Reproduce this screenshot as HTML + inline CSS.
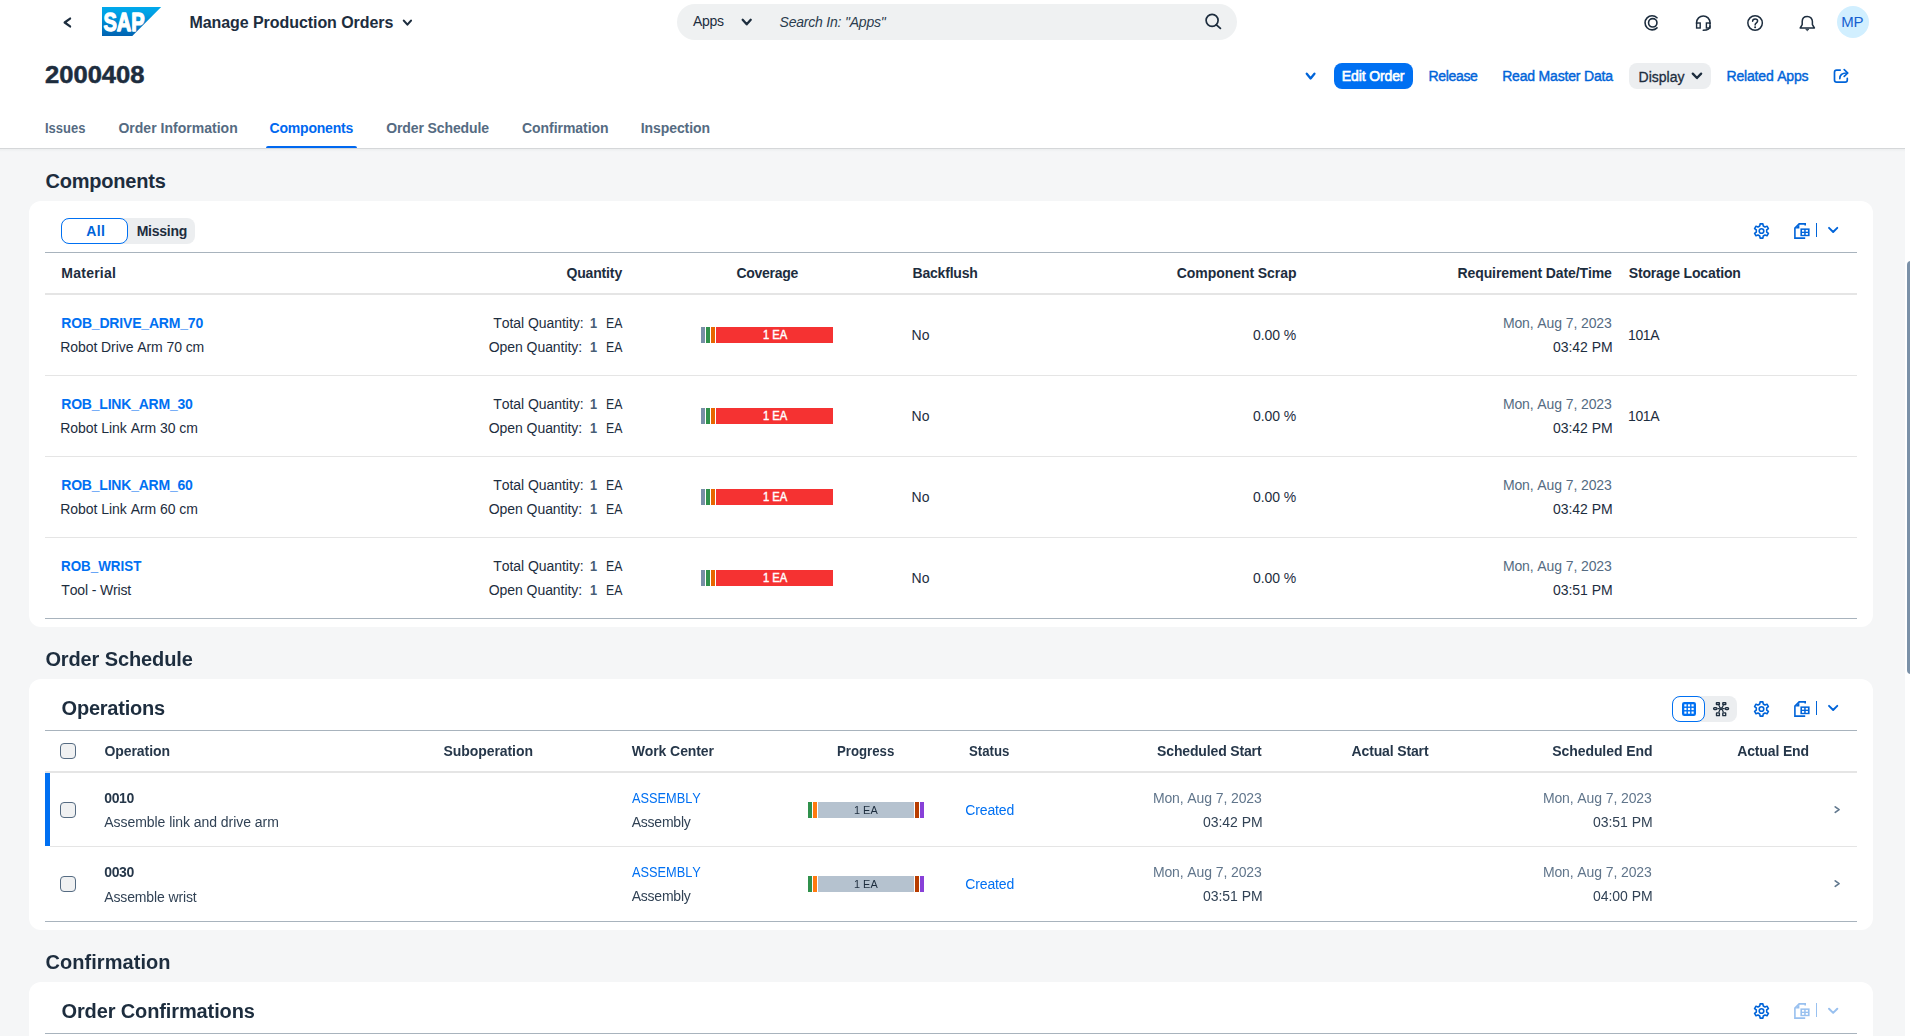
<!DOCTYPE html>
<html lang="en">
<head>
<meta charset="utf-8">
<title>Manage Production Orders</title>
<style>
html,body{margin:0;padding:0;}
body{width:1910px;height:1036px;overflow:hidden;position:relative;background:#fff;font-family:"Liberation Sans", sans-serif;color:#1d2d3e;}
#root{position:absolute;left:0;top:0;width:1910px;height:1036px;overflow:hidden;}
#root div,#root svg{position:absolute;box-sizing:border-box;}
.g{left:0;top:0;width:1910px;height:1036px;will-change:transform;}
.t{position:absolute;white-space:pre;line-height:1;font-kerning:none;}
</style>
</head>
<body>
<div id="root">
<div style="left:0px;top:149px;width:1905px;height:887px;background:#f5f6f7;"></div>
<div style="left:0px;top:148px;width:1905px;height:1px;background:#d5d7d9;"></div>
<div style="left:0px;top:149px;width:1905px;height:3px;background:linear-gradient(#eceeef,#f5f6f7);"></div>
<div style="left:1907px;top:261px;width:8px;height:413px;background:#7b91a8;border-radius:4px;"></div>
<svg style="left:0;top:0;width:1910px;height:1036px" viewBox="0 0 1910 1036"><polyline points="70.08,18.52 64.67,22.50 70.08,26.48" fill="none" stroke="#1d2d3e" stroke-width="2.2" stroke-linecap="round" stroke-linejoin="round"/></svg>
<svg style="left:102px;top:7px;width:59.2px;height:29px;overflow:visible" viewBox="0 0 59.2 29"><defs><linearGradient id="sapg" x1="0" y1="0" x2="0" y2="1"><stop offset="0" stop-color="#00a9ec"/><stop offset="0.25" stop-color="#009fe3"/><stop offset="1" stop-color="#0062b1"/></linearGradient></defs>
<polygon points="0,0 59.2,0 30.3,29 0,29" fill="url(#sapg)"/>
<text x="1.5" y="23.7" font-family="Liberation Sans, sans-serif" font-weight="700" font-size="25" fill="#fff" stroke="#fff" stroke-width="1.3" stroke-linejoin="round" textLength="41.2" lengthAdjust="spacingAndGlyphs">SAP</text></svg>
<svg style="left:0;top:0;width:1910px;height:1036px" viewBox="0 0 1910 1036"><polyline points="403.79,20.59 407.40,24.68 411.01,20.59" fill="none" stroke="#1d2d3e" stroke-width="2.1" stroke-linecap="round" stroke-linejoin="round"/></svg>
<div style="left:677px;top:4px;width:560px;height:36px;background:#eff1f2;border-radius:18px;"></div>
<svg style="left:0;top:0;width:1910px;height:1036px" viewBox="0 0 1910 1036"><polyline points="742.66,19.76 746.70,24.28 750.74,19.76" fill="none" stroke="#1d2d3e" stroke-width="2.3" stroke-linecap="round" stroke-linejoin="round"/></svg>
<svg style="left:1200px;top:10px;width:24px;height:24px;overflow:visible" viewBox="0 0 24 24"><circle cx="12.1" cy="10.3" r="6" fill="none" stroke="#1d2d3e" stroke-width="1.7"/><line x1="16.4" y1="14.8" x2="20.4" y2="18.4" stroke="#1d2d3e" stroke-width="1.8" stroke-linecap="round"/></svg>
<svg style="left:1640px;top:11px;width:24px;height:24px;overflow:visible" viewBox="0 0 24 24"><path d="M17.00,16.92A7.05,7.05 0 1 1 17.00,6.78" fill="none" stroke="#1d2d3e" stroke-width="1.6" stroke-linecap="round"/><circle cx="12.75" cy="11.85" r="4.2" fill="none" stroke="#1d2d3e" stroke-width="1.6"/></svg>
<svg style="left:1691px;top:11px;width:24px;height:24px;overflow:visible" viewBox="0 0 24 24"><path d="M5.6,13 V11.6 A6.7,6.7 0 0 1 19,11.6 V13" fill="none" stroke="#1d2d3e" stroke-width="1.5"/>
<rect x="5.6" y="12" width="3.6" height="5" fill="none" stroke="#1d2d3e" stroke-width="1.4"/>
<rect x="15.4" y="12" width="3.6" height="5" fill="none" stroke="#1d2d3e" stroke-width="1.4"/>
<path d="M19,15 C19,18 16,19.3 12.2,19.3" fill="none" stroke="#1d2d3e" stroke-width="1.5" stroke-linecap="round"/></svg>
<svg style="left:1743px;top:11px;width:24px;height:24px;overflow:visible" viewBox="0 0 24 24"><circle cx="12.1" cy="12" r="7.25" fill="none" stroke="#1d2d3e" stroke-width="1.5"/>
<path d="M9.6,10.2 C9.6,8.6 10.8,7.9 12.1,7.9 C13.6,7.9 14.6,8.8 14.6,10 C14.6,11.8 12.1,11.9 12.1,14" fill="none" stroke="#1d2d3e" stroke-width="1.5" stroke-linecap="round"/>
<circle cx="12.1" cy="16.2" r="1" fill="#1d2d3e"/></svg>
<svg style="left:1795px;top:11px;width:24px;height:24px;overflow:visible" viewBox="0 0 24 24"><path d="M5.2,17 H19.4 L17.4,13.6 V10.6 C17.4,7.4 15.2,5.5 12.3,5.5 C9.4,5.5 7.2,7.4 7.2,10.6 V13.6 Z" fill="none" stroke="#1d2d3e" stroke-width="1.5" stroke-linejoin="round"/>
<path d="M10.6,18.2 H14 L12.3,19.8 Z" fill="#1d2d3e" stroke="#1d2d3e" stroke-width="0.6" stroke-linejoin="round"/></svg>
<div style="left:1837px;top:6px;width:32px;height:32px;background:#d1efff;border-radius:16px;"></div>
<svg style="left:0;top:0;width:1910px;height:1036px" viewBox="0 0 1910 1036"><polyline points="1306.76,73.76 1310.60,78.48 1314.44,73.76" fill="none" stroke="#0064d9" stroke-width="2.3" stroke-linecap="round" stroke-linejoin="round"/></svg>
<div style="left:1334px;top:63px;width:79px;height:26px;background:#0070f2;border-radius:8px;"></div>
<div style="left:1629px;top:63px;width:82px;height:26px;background:#eceef0;border-radius:8px;"></div>
<svg style="left:0;top:0;width:1910px;height:1036px" viewBox="0 0 1910 1036"><polyline points="1692.76,73.66 1696.95,78.08 1701.14,73.66" fill="none" stroke="#1d2d3e" stroke-width="2.3" stroke-linecap="round" stroke-linejoin="round"/></svg>
<svg style="left:1832px;top:67px;width:18px;height:18px;overflow:visible" viewBox="0 0 18 18"><path d="M8.2,3.1 H4.6 C3.3,3.1 2.5,3.9 2.5,5.2 V13 C2.5,14.3 3.3,15.1 4.6,15.1 H13.2 C14.5,15.1 15.3,14.3 15.3,13 V11.4" fill="none" stroke="#0064d9" stroke-width="1.7" stroke-linecap="round"/>
<path d="M7.8,11.6 C7.8,8 9.8,6 14.6,6" fill="none" stroke="#0064d9" stroke-width="1.7" stroke-linecap="round"/>
<path d="M12.2,2.6 L15.8,6 L12.2,9.4" fill="none" stroke="#0064d9" stroke-width="1.7" stroke-linecap="round" stroke-linejoin="round"/></svg>
<div style="left:266px;top:145.6px;width:91px;height:2.4px;background:#0068f0;border-radius:2px 2px 0 0;"></div>
<div style="left:29px;top:201px;width:1844px;height:426px;background:#fff;border-radius:12px;"></div>
<div style="left:61px;top:218px;width:134px;height:26px;background:#eceef0;border-radius:8px;"></div>
<div style="left:61px;top:218px;width:67px;height:26px;background:#fff;border:1px solid #0070f2;border-radius:8px;"></div>
<svg style="left:0;top:0;width:1910px;height:1036px;opacity:1" viewBox="0 0 1910 1036"><path d="M1759.77,225.99 L1760.11,223.83 L1762.89,223.83 L1763.23,225.99 L1764.98,227.00 L1767.01,226.21 L1768.40,228.62 L1766.70,229.99 L1766.70,232.01 L1768.40,233.38 L1767.01,235.79 L1764.98,235.00 L1763.23,236.01 L1762.89,238.17 L1760.11,238.17 L1759.77,236.01 L1758.02,235.00 L1755.99,235.79 L1754.60,233.38 L1756.30,232.01 L1756.30,229.99 L1754.60,228.62 L1755.99,226.21 L1758.02,227.00Z" fill="none" stroke="#0064d9" stroke-width="1.6" stroke-linejoin="round"/><circle cx="1761.5" cy="231" r="2.3" fill="none" stroke="#0064d9" stroke-width="1.6"/></svg>
<svg style="left:1794px;top:223px;width:16px;height:16px;overflow:visible" viewBox="0 0 16 16"><g opacity="1"><path d="M11.2,2.6 V0.9 H5.2 L0.9,5.2 V15.1 H11.2" fill="none" stroke="#0064d9" stroke-width="1.6" stroke-linejoin="miter"/>
<path d="M5.4,1.4 V5.4 H1.4 Z" fill="#0064d9"/>
<rect x="6.4" y="5.4" width="9.2" height="7.8" fill="#0064d9"/>
<rect x="8" y="6.9" width="2.2" height="1.8" fill="#fff"/><rect x="11.7" y="6.9" width="2.2" height="1.8" fill="#fff"/>
<rect x="8" y="10" width="2.2" height="1.8" fill="#fff"/><rect x="11.7" y="10" width="2.2" height="1.8" fill="#fff"/></g></svg>
<div style="left:1816px;top:223px;width:1px;height:14px;background:#0064d9;opacity:1;"></div>
<div style="left:0;top:0;width:1910px;height:1036px;opacity:1">
<svg style="left:0;top:0;width:1910px;height:1036px" viewBox="0 0 1910 1036"><polyline points="1829.01,227.81 1833.15,231.97 1837.29,227.81" fill="none" stroke="#0064d9" stroke-width="1.9" stroke-linecap="round" stroke-linejoin="round"/></svg>
</div>
<div style="left:45px;top:252px;width:1812px;height:1px;background:#a8b3bd;"></div>
<div style="left:45px;top:293px;width:1812px;height:2px;background:#e5e5e5;"></div>
<div style="left:701px;top:327px;width:4px;height:16px;background:#788fa6;"></div>
<div style="left:706px;top:327px;width:4px;height:16px;background:#30914c;"></div>
<div style="left:711px;top:327px;width:4px;height:16px;background:#e76500;"></div>
<div style="left:716px;top:327px;width:117px;height:16px;background:#f53232;"></div>
<div style="left:45px;top:375px;width:1812px;height:1px;background:#e5e5e5;"></div>
<div style="left:701px;top:408px;width:4px;height:16px;background:#788fa6;"></div>
<div style="left:706px;top:408px;width:4px;height:16px;background:#30914c;"></div>
<div style="left:711px;top:408px;width:4px;height:16px;background:#e76500;"></div>
<div style="left:716px;top:408px;width:117px;height:16px;background:#f53232;"></div>
<div style="left:45px;top:456px;width:1812px;height:1px;background:#e5e5e5;"></div>
<div style="left:701px;top:489px;width:4px;height:16px;background:#788fa6;"></div>
<div style="left:706px;top:489px;width:4px;height:16px;background:#30914c;"></div>
<div style="left:711px;top:489px;width:4px;height:16px;background:#e76500;"></div>
<div style="left:716px;top:489px;width:117px;height:16px;background:#f53232;"></div>
<div style="left:45px;top:537px;width:1812px;height:1px;background:#e5e5e5;"></div>
<div style="left:701px;top:570px;width:4px;height:16px;background:#788fa6;"></div>
<div style="left:706px;top:570px;width:4px;height:16px;background:#30914c;"></div>
<div style="left:711px;top:570px;width:4px;height:16px;background:#e76500;"></div>
<div style="left:716px;top:570px;width:117px;height:16px;background:#f53232;"></div>
<div style="left:45px;top:618px;width:1812px;height:1px;background:#a8b3bd;"></div>
<div style="left:29px;top:679px;width:1844px;height:251px;background:#fff;border-radius:12px;"></div>
<div style="left:1672px;top:696px;width:65px;height:26px;background:#eceef0;border-radius:8px;"></div>
<div style="left:1672px;top:696px;width:33px;height:26px;background:#fff;border:1px solid #0070f2;border-radius:8px;"></div>
<svg style="left:1681.5px;top:701.9px;width:14.3px;height:14.2px;overflow:visible" viewBox="0 0 14.3 14.2"><rect x="0" y="0" width="14" height="14" rx="2.2" fill="#0070f2"/><rect x="2.3" y="2.3" width="2.2" height="2.2" fill="#fff"/><rect x="5.9" y="2.3" width="2.2" height="2.2" fill="#fff"/><rect x="9.5" y="2.3" width="2.2" height="2.2" fill="#fff"/><rect x="2.3" y="5.9" width="2.2" height="2.2" fill="#fff"/><rect x="5.9" y="5.9" width="2.2" height="2.2" fill="#fff"/><rect x="9.5" y="5.9" width="2.2" height="2.2" fill="#fff"/><rect x="2.3" y="9.5" width="2.2" height="2.2" fill="#fff"/><rect x="5.9" y="9.5" width="2.2" height="2.2" fill="#fff"/><rect x="9.5" y="9.5" width="2.2" height="2.2" fill="#fff"/></svg>
<svg style="left:1712.9px;top:701.8px;width:16.2px;height:14.3px;overflow:visible" viewBox="0 0 16.2 14.3"><rect x="3.4" y="0.6" width="3.0" height="1.9" rx="0.3" fill="none" stroke="#1f2f40" stroke-width="1.35"/><rect x="9.8" y="0.6" width="3.0" height="1.9" rx="0.3" fill="none" stroke="#1f2f40" stroke-width="1.35"/><rect x="3.5" y="10.9" width="2.9" height="2.8" rx="0.3" fill="none" stroke="#1f2f40" stroke-width="1.35"/><rect x="9.8" y="10.9" width="2.9" height="2.8" rx="0.3" fill="none" stroke="#1f2f40" stroke-width="1.35"/><rect x="0.6" y="5.7" width="3.4" height="1.8" rx="0.9" fill="none" stroke="#1f2f40" stroke-width="1.35"/><rect x="12.2" y="5.7" width="3.4" height="1.8" rx="0.9" fill="none" stroke="#1f2f40" stroke-width="1.35"/><rect x="7.0" y="5.8" width="2.2" height="1.6" rx="0.3" fill="none" stroke="#1f2f40" stroke-width="1.35"/>
<path d="M7.0,5.8 L5.8,3.1 M9.2,5.8 L10.4,3.1 M7.0,7.4 L5.8,10.3 M9.2,7.4 L10.4,10.3 M4.6,6.6 H6.4 M9.8,6.6 H11.6" stroke="#1f2f40" stroke-width="1.2" fill="none"/></svg>
<svg style="left:0;top:0;width:1910px;height:1036px;opacity:1" viewBox="0 0 1910 1036"><path d="M1759.77,703.99 L1760.11,701.83 L1762.89,701.83 L1763.23,703.99 L1764.98,705.00 L1767.01,704.21 L1768.40,706.62 L1766.70,707.99 L1766.70,710.01 L1768.40,711.38 L1767.01,713.79 L1764.98,713.00 L1763.23,714.01 L1762.89,716.17 L1760.11,716.17 L1759.77,714.01 L1758.02,713.00 L1755.99,713.79 L1754.60,711.38 L1756.30,710.01 L1756.30,707.99 L1754.60,706.62 L1755.99,704.21 L1758.02,705.00Z" fill="none" stroke="#0064d9" stroke-width="1.6" stroke-linejoin="round"/><circle cx="1761.5" cy="709" r="2.3" fill="none" stroke="#0064d9" stroke-width="1.6"/></svg>
<svg style="left:1794px;top:701px;width:16px;height:16px;overflow:visible" viewBox="0 0 16 16"><g opacity="1"><path d="M11.2,2.6 V0.9 H5.2 L0.9,5.2 V15.1 H11.2" fill="none" stroke="#0064d9" stroke-width="1.6" stroke-linejoin="miter"/>
<path d="M5.4,1.4 V5.4 H1.4 Z" fill="#0064d9"/>
<rect x="6.4" y="5.4" width="9.2" height="7.8" fill="#0064d9"/>
<rect x="8" y="6.9" width="2.2" height="1.8" fill="#fff"/><rect x="11.7" y="6.9" width="2.2" height="1.8" fill="#fff"/>
<rect x="8" y="10" width="2.2" height="1.8" fill="#fff"/><rect x="11.7" y="10" width="2.2" height="1.8" fill="#fff"/></g></svg>
<div style="left:1816px;top:701px;width:1px;height:14px;background:#0064d9;opacity:1;"></div>
<div style="left:0;top:0;width:1910px;height:1036px;opacity:1">
<svg style="left:0;top:0;width:1910px;height:1036px" viewBox="0 0 1910 1036"><polyline points="1829.01,705.81 1833.15,709.97 1837.29,705.81" fill="none" stroke="#0064d9" stroke-width="1.9" stroke-linecap="round" stroke-linejoin="round"/></svg>
</div>
<div style="left:45px;top:730px;width:1812px;height:1px;background:#a8b3bd;"></div>
<div style="left:60px;top:743px;width:16px;height:16px;background:#f0f1f2;border:1.2px solid #556b82;border-radius:4px;"></div>
<div style="left:45px;top:771px;width:1812px;height:2px;background:#e5e5e5;"></div>
<div style="left:45px;top:773px;width:5px;height:73px;background:#0070f2;"></div>
<div style="left:60px;top:802px;width:16px;height:16px;background:#f0f1f2;border:1.2px solid #556b82;border-radius:4px;"></div>
<div style="left:808px;top:802px;width:4px;height:16px;background:#30914c;"></div>
<div style="left:813px;top:802px;width:4px;height:16px;background:#ff7a0f;"></div>
<div style="left:818px;top:802px;width:96px;height:16px;background:#b5c2cf;"></div>
<div style="left:915px;top:802px;width:4px;height:16px;background:#b83d00;"></div>
<div style="left:920px;top:802px;width:4px;height:16px;background:#8840d8;"></div>
<svg style="left:0;top:0;width:1910px;height:1036px" viewBox="0 0 1910 1036"><polyline points="1835.24,806.84 1839.07,809.60 1835.24,812.36" fill="none" stroke="#62798f" stroke-width="1.7" stroke-linecap="round" stroke-linejoin="round"/></svg>
<div style="left:60px;top:876px;width:16px;height:16px;background:#f0f1f2;border:1.2px solid #556b82;border-radius:4px;"></div>
<div style="left:808px;top:876px;width:4px;height:16px;background:#30914c;"></div>
<div style="left:813px;top:876px;width:4px;height:16px;background:#ff7a0f;"></div>
<div style="left:818px;top:876px;width:96px;height:16px;background:#b5c2cf;"></div>
<div style="left:915px;top:876px;width:4px;height:16px;background:#b83d00;"></div>
<div style="left:920px;top:876px;width:4px;height:16px;background:#8840d8;"></div>
<svg style="left:0;top:0;width:1910px;height:1036px" viewBox="0 0 1910 1036"><polyline points="1835.24,880.84 1839.07,883.60 1835.24,886.36" fill="none" stroke="#62798f" stroke-width="1.7" stroke-linecap="round" stroke-linejoin="round"/></svg>
<div style="left:50px;top:846px;width:1807px;height:1px;background:#e5e5e5;"></div>
<div style="left:45px;top:921px;width:1812px;height:1px;background:#a8b3bd;"></div>
<div style="left:29px;top:982px;width:1844px;height:80px;background:#fff;border-radius:12px;"></div>
<svg style="left:0;top:0;width:1910px;height:1036px;opacity:1" viewBox="0 0 1910 1036"><path d="M1759.77,1005.99 L1760.11,1003.83 L1762.89,1003.83 L1763.23,1005.99 L1764.98,1007.00 L1767.01,1006.21 L1768.40,1008.62 L1766.70,1009.99 L1766.70,1012.01 L1768.40,1013.38 L1767.01,1015.79 L1764.98,1015.00 L1763.23,1016.01 L1762.89,1018.17 L1760.11,1018.17 L1759.77,1016.01 L1758.02,1015.00 L1755.99,1015.79 L1754.60,1013.38 L1756.30,1012.01 L1756.30,1009.99 L1754.60,1008.62 L1755.99,1006.21 L1758.02,1007.00Z" fill="none" stroke="#0064d9" stroke-width="1.6" stroke-linejoin="round"/><circle cx="1761.5" cy="1011" r="2.3" fill="none" stroke="#0064d9" stroke-width="1.6"/></svg>
<svg style="left:1794px;top:1003px;width:16px;height:16px;overflow:visible" viewBox="0 0 16 16"><g opacity="0.4"><path d="M11.2,2.6 V0.9 H5.2 L0.9,5.2 V15.1 H11.2" fill="none" stroke="#0064d9" stroke-width="1.6" stroke-linejoin="miter"/>
<path d="M5.4,1.4 V5.4 H1.4 Z" fill="#0064d9"/>
<rect x="6.4" y="5.4" width="9.2" height="7.8" fill="#0064d9"/>
<rect x="8" y="6.9" width="2.2" height="1.8" fill="#fff"/><rect x="11.7" y="6.9" width="2.2" height="1.8" fill="#fff"/>
<rect x="8" y="10" width="2.2" height="1.8" fill="#fff"/><rect x="11.7" y="10" width="2.2" height="1.8" fill="#fff"/></g></svg>
<div style="left:1816px;top:1003px;width:1px;height:14px;background:#0064d9;opacity:0.4;"></div>
<div style="left:0;top:0;width:1910px;height:1036px;opacity:0.4">
<svg style="left:0;top:0;width:1910px;height:1036px" viewBox="0 0 1910 1036"><polyline points="1829.01,1008.71 1833.15,1012.87 1837.29,1008.71" fill="none" stroke="#0064d9" stroke-width="1.9" stroke-linecap="round" stroke-linejoin="round"/></svg>
</div>
<div style="left:45px;top:1033px;width:1812px;height:1px;background:#a8b3bd;"></div>
<span class="t" style="left:189.40px;top:15px;font-size:16px;font-weight:700;letter-spacing:-0.060px;">Manage Production Orders</span>
<span class="t" style="left:693.00px;top:14px;font-size:14px;letter-spacing:-0.303px;">Apps</span>
<span class="t" style="left:779.50px;top:15px;font-size:14px;font-style:italic;color:#2b3c4e;letter-spacing:-0.205px;">Search In: &quot;Apps&quot;</span>
<span class="t" style="left:1841.30px;top:14px;font-size:15px;color:#1660d0;letter-spacing:-0.195px;">MP</span>
<span class="t" style="left:45.40px;top:63px;font-size:24px;font-weight:700;transform:scaleX(1.0646);transform-origin:0 0;-webkit-text-stroke:0.5px #1d2d3e;">2000408</span>
<span class="t" style="left:1341.80px;top:69px;font-size:14px;color:#fff;letter-spacing:-0.126px;-webkit-text-stroke:0.6px #fff;">Edit Order</span>
<span class="t" style="left:1428.40px;top:69px;font-size:14px;color:#0064d9;letter-spacing:-0.313px;-webkit-text-stroke:0.4px #0064d9;">Release</span>
<span class="t" style="left:1502.20px;top:69px;font-size:14px;color:#0064d9;letter-spacing:-0.188px;-webkit-text-stroke:0.4px #0064d9;">Read Master Data</span>
<span class="t" style="left:1638.60px;top:70px;font-size:14px;letter-spacing:-0.017px;-webkit-text-stroke:0.3px #1d2d3e;">Display</span>
<span class="t" style="left:1726.60px;top:69px;font-size:14px;color:#0064d9;letter-spacing:-0.196px;-webkit-text-stroke:0.4px #0064d9;">Related Apps</span>
<span class="t" style="left:45.40px;top:121px;font-size:14px;font-weight:700;color:#556b82;transform:scaleX(0.9269);transform-origin:0 0;">Issues</span>
<span class="t" style="left:118.40px;top:121px;font-size:14px;font-weight:700;color:#556b82;letter-spacing:0.022px;">Order Information</span>
<span class="t" style="left:269.60px;top:121px;font-size:14px;font-weight:700;color:#0068f0;letter-spacing:-0.207px;">Components</span>
<span class="t" style="left:386.20px;top:121px;font-size:14px;font-weight:700;color:#556b82;letter-spacing:-0.105px;">Order Schedule</span>
<span class="t" style="left:521.90px;top:121px;font-size:14px;font-weight:700;color:#556b82;letter-spacing:-0.032px;">Confirmation</span>
<span class="t" style="left:640.80px;top:121px;font-size:14px;font-weight:700;color:#556b82;letter-spacing:-0.095px;">Inspection</span>
<span class="t" style="left:45.40px;top:171px;font-size:20px;font-weight:700;letter-spacing:-0.199px;">Components</span>
<span class="t" style="left:86.30px;top:224px;font-size:14px;font-weight:700;color:#0064d9;letter-spacing:0.350px;">All</span>
<span class="t" style="left:136.70px;top:224px;font-size:14px;font-weight:700;letter-spacing:-0.261px;">Missing</span>
<span class="t" style="left:61.30px;top:266px;font-size:14px;font-weight:700;letter-spacing:0.240px;">Material</span>
<span class="t" style="left:566.40px;top:266px;font-size:14px;font-weight:700;letter-spacing:-0.142px;">Quantity</span>
<span class="t" style="left:736.50px;top:266px;font-size:14px;font-weight:700;letter-spacing:-0.303px;">Coverage</span>
<span class="t" style="left:912.50px;top:266px;font-size:14px;font-weight:700;letter-spacing:-0.195px;">Backflush</span>
<span class="t" style="left:1176.70px;top:266px;font-size:14px;font-weight:700;letter-spacing:-0.051px;">Component Scrap</span>
<span class="t" style="left:1457.50px;top:266px;font-size:14px;font-weight:700;letter-spacing:-0.102px;">Requirement Date/Time</span>
<span class="t" style="left:1628.70px;top:266px;font-size:14px;font-weight:700;letter-spacing:-0.146px;">Storage Location</span>
<span class="t" style="left:61.30px;top:316px;font-size:14px;font-weight:700;color:#0070f2;letter-spacing:-0.188px;">ROB_DRIVE_ARM_70</span>
<span class="t" style="left:60.30px;top:340px;font-size:14px;letter-spacing:-0.076px;">Robot Drive Arm 70 cm</span>
<span class="t" style="left:493.20px;top:316px;font-size:14px;letter-spacing:-0.043px;">Total Quantity:</span>
<span class="t" style="left:590.40px;top:316px;font-size:14px;font-weight:700;color:#475e75;transform:scaleX(0.9125);transform-origin:0 0;">1</span>
<span class="t" style="left:605.72px;top:316px;font-size:14px;transform:scaleX(0.8780);transform-origin:0 0;">EA</span>
<span class="t" style="left:488.80px;top:340px;font-size:14px;letter-spacing:-0.067px;">Open Quantity:</span>
<span class="t" style="left:590.40px;top:340px;font-size:14px;font-weight:700;color:#475e75;transform:scaleX(0.9125);transform-origin:0 0;">1</span>
<span class="t" style="left:605.72px;top:340px;font-size:14px;transform:scaleX(0.8780);transform-origin:0 0;">EA</span>
<span class="t" style="left:762.70px;top:329px;font-size:12px;color:#fff;transform:scaleX(0.9342);transform-origin:0 0;-webkit-text-stroke:0.4px #fff;">1 EA</span>
<span class="t" style="left:911.50px;top:328px;font-size:14px;letter-spacing:0.190px;">No</span>
<span class="t" style="left:1253.10px;top:328px;font-size:14px;letter-spacing:-0.088px;">0.00 %</span>
<span class="t" style="left:1502.90px;top:316px;font-size:14px;color:#556b82;letter-spacing:-0.109px;">Mon, Aug 7, 2023</span>
<span class="t" style="left:1553.00px;top:340px;font-size:14px;letter-spacing:-0.037px;">03:42 PM</span>
<span class="t" style="left:1628.00px;top:328px;font-size:14px;letter-spacing:-0.353px;">101A</span>
<span class="t" style="left:61.30px;top:397px;font-size:14px;font-weight:700;color:#0070f2;letter-spacing:-0.214px;">ROB_LINK_ARM_30</span>
<span class="t" style="left:60.30px;top:421px;font-size:14px;letter-spacing:-0.044px;">Robot Link Arm 30 cm</span>
<span class="t" style="left:493.20px;top:397px;font-size:14px;letter-spacing:-0.043px;">Total Quantity:</span>
<span class="t" style="left:590.40px;top:397px;font-size:14px;font-weight:700;color:#475e75;transform:scaleX(0.9125);transform-origin:0 0;">1</span>
<span class="t" style="left:605.72px;top:397px;font-size:14px;transform:scaleX(0.8780);transform-origin:0 0;">EA</span>
<span class="t" style="left:488.80px;top:421px;font-size:14px;letter-spacing:-0.067px;">Open Quantity:</span>
<span class="t" style="left:590.40px;top:421px;font-size:14px;font-weight:700;color:#475e75;transform:scaleX(0.9125);transform-origin:0 0;">1</span>
<span class="t" style="left:605.72px;top:421px;font-size:14px;transform:scaleX(0.8780);transform-origin:0 0;">EA</span>
<span class="t" style="left:762.70px;top:410px;font-size:12px;color:#fff;transform:scaleX(0.9342);transform-origin:0 0;-webkit-text-stroke:0.4px #fff;">1 EA</span>
<span class="t" style="left:911.50px;top:409px;font-size:14px;letter-spacing:0.190px;">No</span>
<span class="t" style="left:1253.10px;top:409px;font-size:14px;letter-spacing:-0.088px;">0.00 %</span>
<span class="t" style="left:1502.90px;top:397px;font-size:14px;color:#556b82;letter-spacing:-0.109px;">Mon, Aug 7, 2023</span>
<span class="t" style="left:1553.00px;top:421px;font-size:14px;letter-spacing:-0.037px;">03:42 PM</span>
<span class="t" style="left:1628.00px;top:409px;font-size:14px;letter-spacing:-0.353px;">101A</span>
<span class="t" style="left:61.30px;top:478px;font-size:14px;font-weight:700;color:#0070f2;letter-spacing:-0.214px;">ROB_LINK_ARM_60</span>
<span class="t" style="left:60.30px;top:502px;font-size:14px;letter-spacing:-0.044px;">Robot Link Arm 60 cm</span>
<span class="t" style="left:493.20px;top:478px;font-size:14px;letter-spacing:-0.043px;">Total Quantity:</span>
<span class="t" style="left:590.40px;top:478px;font-size:14px;font-weight:700;color:#475e75;transform:scaleX(0.9125);transform-origin:0 0;">1</span>
<span class="t" style="left:605.72px;top:478px;font-size:14px;transform:scaleX(0.8780);transform-origin:0 0;">EA</span>
<span class="t" style="left:488.80px;top:502px;font-size:14px;letter-spacing:-0.067px;">Open Quantity:</span>
<span class="t" style="left:590.40px;top:502px;font-size:14px;font-weight:700;color:#475e75;transform:scaleX(0.9125);transform-origin:0 0;">1</span>
<span class="t" style="left:605.72px;top:502px;font-size:14px;transform:scaleX(0.8780);transform-origin:0 0;">EA</span>
<span class="t" style="left:762.70px;top:491px;font-size:12px;color:#fff;transform:scaleX(0.9342);transform-origin:0 0;-webkit-text-stroke:0.4px #fff;">1 EA</span>
<span class="t" style="left:911.50px;top:490px;font-size:14px;letter-spacing:0.190px;">No</span>
<span class="t" style="left:1253.10px;top:490px;font-size:14px;letter-spacing:-0.088px;">0.00 %</span>
<span class="t" style="left:1502.90px;top:478px;font-size:14px;color:#556b82;letter-spacing:-0.109px;">Mon, Aug 7, 2023</span>
<span class="t" style="left:1553.00px;top:502px;font-size:14px;letter-spacing:-0.037px;">03:42 PM</span>
<span class="t" style="left:61.30px;top:559px;font-size:14px;font-weight:700;color:#0070f2;transform:scaleX(0.9568);transform-origin:0 0;">ROB_WRIST</span>
<span class="t" style="left:61.30px;top:583px;font-size:14px;letter-spacing:-0.151px;">Tool - Wrist</span>
<span class="t" style="left:493.20px;top:559px;font-size:14px;letter-spacing:-0.043px;">Total Quantity:</span>
<span class="t" style="left:590.40px;top:559px;font-size:14px;font-weight:700;color:#475e75;transform:scaleX(0.9125);transform-origin:0 0;">1</span>
<span class="t" style="left:605.72px;top:559px;font-size:14px;transform:scaleX(0.8780);transform-origin:0 0;">EA</span>
<span class="t" style="left:488.80px;top:583px;font-size:14px;letter-spacing:-0.067px;">Open Quantity:</span>
<span class="t" style="left:590.40px;top:583px;font-size:14px;font-weight:700;color:#475e75;transform:scaleX(0.9125);transform-origin:0 0;">1</span>
<span class="t" style="left:605.72px;top:583px;font-size:14px;transform:scaleX(0.8780);transform-origin:0 0;">EA</span>
<span class="t" style="left:762.70px;top:572px;font-size:12px;color:#fff;transform:scaleX(0.9342);transform-origin:0 0;-webkit-text-stroke:0.4px #fff;">1 EA</span>
<span class="t" style="left:911.50px;top:571px;font-size:14px;letter-spacing:0.190px;">No</span>
<span class="t" style="left:1253.10px;top:571px;font-size:14px;letter-spacing:-0.088px;">0.00 %</span>
<span class="t" style="left:1502.90px;top:559px;font-size:14px;color:#556b82;letter-spacing:-0.109px;">Mon, Aug 7, 2023</span>
<span class="t" style="left:1553.00px;top:583px;font-size:14px;letter-spacing:-0.037px;">03:51 PM</span>
<div class="g">
<span class="t" style="left:45.40px;top:649px;font-size:20px;font-weight:700;letter-spacing:-0.116px;">Order Schedule</span>
<span class="t" style="left:61.60px;top:698px;font-size:20px;font-weight:700;letter-spacing:-0.228px;">Operations</span>
<span class="t" style="left:104.50px;top:744px;font-size:14px;font-weight:700;color:#26374a;letter-spacing:-0.083px;">Operation</span>
<span class="t" style="left:443.50px;top:744px;font-size:14px;font-weight:700;color:#26374a;letter-spacing:-0.070px;">Suboperation</span>
<span class="t" style="left:631.70px;top:744px;font-size:14px;font-weight:700;color:#26374a;letter-spacing:-0.093px;">Work Center</span>
<span class="t" style="left:836.80px;top:744px;font-size:14px;font-weight:700;color:#26374a;transform:scaleX(0.9440);transform-origin:0 0;">Progress</span>
<span class="t" style="left:969.40px;top:744px;font-size:14px;font-weight:700;color:#26374a;transform:scaleX(0.9442);transform-origin:0 0;">Status</span>
<span class="t" style="left:1157.10px;top:744px;font-size:14px;font-weight:700;color:#26374a;letter-spacing:-0.151px;">Scheduled Start</span>
<span class="t" style="left:1351.60px;top:744px;font-size:14px;font-weight:700;color:#26374a;letter-spacing:-0.146px;">Actual Start</span>
<span class="t" style="left:1552.20px;top:744px;font-size:14px;font-weight:700;color:#26374a;letter-spacing:-0.064px;">Scheduled End</span>
<span class="t" style="left:1737.20px;top:744px;font-size:14px;font-weight:700;color:#26374a;letter-spacing:-0.141px;">Actual End</span>
<span class="t" style="left:104.20px;top:791px;font-size:14px;font-weight:700;color:#26374a;letter-spacing:-0.319px;">0010</span>
<span class="t" style="left:104.20px;top:815px;font-size:14px;color:#314255;letter-spacing:-0.046px;">Assemble link and drive arm</span>
<span class="t" style="left:631.70px;top:791px;font-size:14px;color:#0070f2;transform:scaleX(0.9121);transform-origin:0 0;">ASSEMBLY</span>
<span class="t" style="left:631.70px;top:815px;font-size:14px;color:#314255;letter-spacing:-0.226px;">Assembly</span>
<span class="t" style="left:853.50px;top:805px;font-size:11.5px;transform:scaleX(0.9501);transform-origin:0 0;">1 EA</span>
<span class="t" style="left:965.20px;top:803px;font-size:14px;color:#0070f2;letter-spacing:-0.120px;">Created</span>
<span class="t" style="left:1152.90px;top:791px;font-size:14px;color:#60758b;letter-spacing:-0.109px;">Mon, Aug 7, 2023</span>
<span class="t" style="left:1203.00px;top:815px;font-size:14px;color:#314255;letter-spacing:-0.037px;">03:42 PM</span>
<span class="t" style="left:1542.90px;top:791px;font-size:14px;color:#60758b;letter-spacing:-0.109px;">Mon, Aug 7, 2023</span>
<span class="t" style="left:1593.00px;top:815px;font-size:14px;color:#314255;letter-spacing:-0.037px;">03:51 PM</span>
<span class="t" style="left:104.20px;top:865px;font-size:14px;font-weight:700;color:#26374a;letter-spacing:-0.319px;">0030</span>
<span class="t" style="left:104.20px;top:890px;font-size:14px;color:#314255;letter-spacing:-0.126px;">Assemble wrist</span>
<span class="t" style="left:631.70px;top:865px;font-size:14px;color:#0070f2;transform:scaleX(0.9121);transform-origin:0 0;">ASSEMBLY</span>
<span class="t" style="left:631.70px;top:889px;font-size:14px;color:#314255;letter-spacing:-0.226px;">Assembly</span>
<span class="t" style="left:853.50px;top:879px;font-size:11.5px;transform:scaleX(0.9501);transform-origin:0 0;">1 EA</span>
<span class="t" style="left:965.20px;top:877px;font-size:14px;color:#0070f2;letter-spacing:-0.120px;">Created</span>
<span class="t" style="left:1152.90px;top:865px;font-size:14px;color:#60758b;letter-spacing:-0.109px;">Mon, Aug 7, 2023</span>
<span class="t" style="left:1203.00px;top:889px;font-size:14px;color:#314255;letter-spacing:-0.037px;">03:51 PM</span>
<span class="t" style="left:1542.90px;top:865px;font-size:14px;color:#60758b;letter-spacing:-0.109px;">Mon, Aug 7, 2023</span>
<span class="t" style="left:1593.00px;top:889px;font-size:14px;color:#314255;letter-spacing:-0.037px;">04:00 PM</span>
<span class="t" style="left:45.40px;top:952px;font-size:20px;font-weight:700;letter-spacing:0.062px;">Confirmation</span>
<span class="t" style="left:61.50px;top:1001px;font-size:20px;font-weight:700;letter-spacing:-0.120px;">Order Confirmations</span>
</div>
</div>
</body>
</html>
